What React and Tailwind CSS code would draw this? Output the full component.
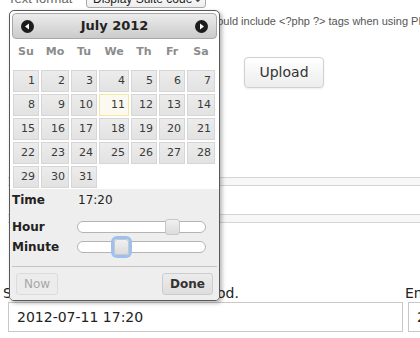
import React from 'react';

const days = [
  [1, 2, 3, 4, 5, 6, 7],
  [8, 9, 10, 11, 12, 13, 14],
  [15, 16, 17, 18, 19, 20, 21],
  [22, 23, 24, 25, 26, 27, 28],
  [29, 30, 31],
];

const names = ['Su', 'Mo', 'Tu', 'We', 'Th', 'Fr', 'Sa'];

function NavArrow({ dir }) {
  // black disc with a white triangle
  return (
    <svg width="13" height="13" viewBox="0 0 13 13">
      <circle cx="6.5" cy="6.5" r="6.5" fill="#1c1c1c" />
      {dir === 'prev' ? (
        <path d="M4 6.5 L8 3.5 L8 9.5 Z" fill="#fff" />
      ) : (
        <path d="M9 6.5 L5 3.5 L5 9.5 Z" fill="#fff" />
      )}
    </svg>
  );
}

function Slider({ left, focused }) {
  return (
    <div className="relative w-[129px] h-[12px] rounded-full border border-[#b4b4b4] bg-white">
      <div
        className={`absolute top-[-3px] w-[15px] h-[16px] rounded-[3px] border border-[#c8c8c8] bg-gradient-to-b from-[#f0f0f0] to-[#dcdcdc] ${focused ? 'ring-[3px] ring-[#9dc0ee]' : ''}`}
        style={{ left }}
      />
    </div>
  );
}

function DatePicker() {
  return (
    <div className="absolute left-[9px] top-[10px] w-[211px] h-[291px] border border-[#585858] rounded-[5px] bg-white shadow-[2px_2px_4px_rgba(0,0,0,0.3)] overflow-hidden flex flex-col font-['DejaVu_Sans',sans-serif]">
      {/* Header */}
      <div className="pt-[2px] pl-[2px] pr-[2px]">
        <div className="h-[26px] border border-[#a8a8a8] rounded-[4px] bg-gradient-to-b from-[#ececec] to-[#cbcbcb] flex items-center justify-between px-[8px]">
          <NavArrow dir="prev" />
          <span className="text-[13px] font-bold text-[#222]">July 2012</span>
          <NavArrow dir="next" />
        </div>
      </div>

      {/* Day names */}
      <div className="h-[31px] pt-[6px] pl-[3px] grid grid-cols-[26px_28px_26px_30px_26px_26px_28px] gap-x-[2px]">
        {names.map((n) => (
          <span key={n} className="text-center text-[11px] leading-[13px] font-bold text-[#8c8c8c]">
            {n}
          </span>
        ))}
      </div>

      {/* Days */}
      <div className="pl-[3px] pb-[1px] grid grid-cols-[26px_28px_26px_30px_26px_26px_28px] gap-[2px]">
        {days.flat().map((d) => (
          <div
            key={d}
            className={`h-[22px] border flex items-center justify-end pr-[3px] text-[11px] text-[#3a3a3a] ${d === 11 ? 'border-[#f5e6a0] bg-[#fcfaf0]' : 'border-[#d6d6d6] bg-gradient-to-b from-[#ececec] to-[#e2e2e2]'}`}
          >
            {d}
          </div>
        ))}
      </div>

      {/* Time picker */}
      <div className="flex-1 bg-[#eeeeee] pl-[2px] pr-[2px] flex flex-col">
        <div className="h-[22px] flex items-center text-[12px] text-[#222]">
          <span className="w-[66px] font-bold">Time</span>
          <span>17:20</span>
        </div>
        <div className="mt-[6px] h-[20px] flex items-center text-[12px] text-[#222]">
          <span className="w-[65px] font-bold">Hour</span>
          <Slider left={87} />
        </div>
        <div className="h-[20px] flex items-center text-[12px] text-[#222]">
          <span className="w-[65px] font-bold">Minute</span>
          <Slider left={36} focused />
        </div>
        <div className="mt-[9px] border-t border-[#c4c4c4]" />
        <div className="mt-[6px] flex justify-between pl-[4px] pr-[4px]">
          <div className="w-[42px] h-[22px] rounded-[3px] border border-[#dcdcdc] bg-[#ececec] flex items-center justify-center text-[12px] text-[#a8a8a8]">
            Now
          </div>
          <div className="w-[51px] h-[22px] rounded-[3px] border border-[#cdcdcd] bg-gradient-to-b from-[#ececec] to-[#dedede] flex items-center justify-center text-[12px] font-bold text-[#333]">
            Done
          </div>
        </div>
      </div>
    </div>
  );
}

export default function App() {
  return (
    <div className="relative w-[420px] h-[338px] overflow-hidden bg-white font-['DejaVu_Sans',sans-serif] text-[#333]">
      {/* Text format row, cut off at the top */}
      <div className="-mt-[10px] h-[18px] flex items-center pl-[8px] font-['Liberation_Sans',sans-serif]">
        <span className="w-[78px] whitespace-nowrap text-[13px] text-[#666]">Text format</span>
        <div className="w-[120px] h-[18px] border border-[#a9a9a9] rounded-[3px] bg-gradient-to-b from-white to-[#eee] flex items-center justify-between pl-[6px] pr-[3px] text-[12px] text-[#222] whitespace-nowrap">
          <span>Display Suite code</span>
          <span className="text-[9px] leading-none text-[#444]">⬍</span>
        </div>
      </div>

      <p className="mt-[6px] pl-[184px] whitespace-nowrap text-[11px] leading-[14px] text-[#555] font-['Liberation_Sans',sans-serif]">
        You should include &lt;?php ?&gt; tags when using PHP.
      </p>

      <div className="mt-[29px] ml-[244px] w-[80px] h-[31px] rounded-[4px] border border-[#d0d0d0] bg-gradient-to-b from-white to-[#ededed] shadow-[0_1px_2px_rgba(0,0,0,0.08)] flex items-center justify-center text-[14px] text-[#333]">
        Upload
      </div>

      <div className="mt-[89px] ml-[8px] h-[9px] border-y border-[#d6d6d6] bg-[#f7f7f7]" />
      <div className="mt-[28px] ml-[8px] h-[9px] border-y border-[#d6d6d6] bg-[#f7f7f7]" />

      <div className="mt-[62px] grid grid-cols-[400px_1fr]">
        <div className="pl-[3px]">
          <p className="text-[14px] leading-[17px] text-[#222] whitespace-nowrap">Start date and time of the period.</p>
          <div className="ml-[5px] w-[395px] h-[30px] border border-[#c8c8c8] flex items-center pl-[8px] text-[14px] text-[#222]">
            2012-07-11 17:20
          </div>
        </div>
        <div className="pl-[5px]">
          <p className="text-[14px] leading-[17px] text-[#222] whitespace-nowrap">End date and time of the period.</p>
          <div className="ml-[3px] w-[200px] h-[30px] border border-[#c8c8c8] flex items-center pl-[8px] text-[14px] text-[#222]">
            2012-07-25 17:20
          </div>
        </div>
      </div>

      <DatePicker />
    </div>
  );
}
